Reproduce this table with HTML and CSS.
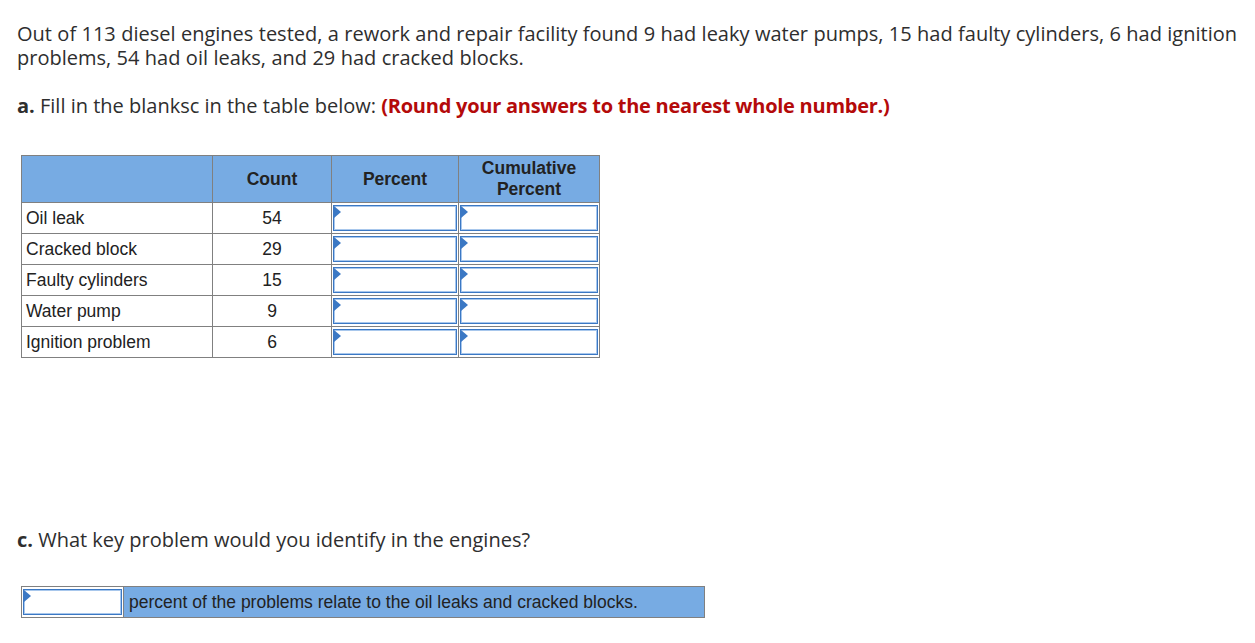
FILE: index.html
```html
<!DOCTYPE html>
<html>
<head>
<meta charset="utf-8">
<link rel="stylesheet" href="styles.css">
</head>
<body>
<div class="page">
  <p class="intro">Out of 113 diesel engines tested, a rework and repair facility found 9 had leaky water pumps, 15 had faulty cylinders, 6 had ignition problems, 54 had oil leaks, and 29 had cracked blocks.</p>
  <p class="part-a"><b>a.</b> Fill in the blanksc in the table below: <span class="hint">(Round your answers to the nearest whole number.)</span></p>

  <table class="grid">
    <thead>
      <tr>
        <th class="c-label"></th>
        <th class="c-count">Count</th>
        <th class="c-pct">Percent</th>
        <th class="c-cum">Cumulative<br>Percent</th>
      </tr>
    </thead>
    <tbody>
      <tr><td class="label">Oil leak</td><td class="num">54</td><td class="in"><div class="box"><span class="tri"></span></div></td><td class="in"><div class="box"><span class="tri"></span></div></td></tr>
      <tr><td class="label">Cracked block</td><td class="num">29</td><td class="in"><div class="box"><span class="tri"></span></div></td><td class="in"><div class="box"><span class="tri"></span></div></td></tr>
      <tr><td class="label">Faulty cylinders</td><td class="num">15</td><td class="in"><div class="box"><span class="tri"></span></div></td><td class="in"><div class="box"><span class="tri"></span></div></td></tr>
      <tr><td class="label">Water pump</td><td class="num">9</td><td class="in"><div class="box"><span class="tri"></span></div></td><td class="in"><div class="box"><span class="tri"></span></div></td></tr>
      <tr><td class="label">Ignition problem</td><td class="num">6</td><td class="in"><div class="box"><span class="tri"></span></div></td><td class="in"><div class="box"><span class="tri"></span></div></td></tr>
    </tbody>
  </table>

  <p class="part-c"><b>c.</b> What key problem would you identify in the engines?</p>

  <table class="answer">
    <tr>
      <td class="in small"><div class="box"><span class="tri"></span></div></td>
      <td class="sentence">percent of the problems relate to the oil leaks and cracked blocks.</td>
    </tr>
  </table>
</div>
</body>
</html>
```
FILE: styles.css
```css
html, body {
  margin: 0;
  padding: 0;
  background: #ffffff;
}
.page {
  padding: 22px 0 0 17px;
  font-family: "Open Sans", "Liberation Sans", sans-serif;
  font-size: 20px;
  color: #2e2e2e;
}
.intro {
  margin: 0;
  line-height: 24px;
  width: 1236px;
  word-spacing: 0.2px;
}
.part-a {
  margin: 24px 0 0 0;
  line-height: 24px;
}
.part-a b, .part-c b {
  font-weight: 700;
}
.hint {
  color: #b40a0a;
  font-weight: 700;
  letter-spacing: -0.25px;
}
.grid, .answer {
  border-collapse: collapse;
  font-family: "Liberation Sans", Arial, sans-serif;
  font-size: 17.5px;
  color: #222;
}
.grid {
  margin: 37px 0 0 4px;
}
.grid th {
  background: #77abe3;
  border: 1px solid #808080;
  height: 46px;
  font-weight: 700;
  padding: 0;
  line-height: 21px;
}
.c-label { width: 190px; }
.c-count { width: 118px; }
.c-pct { width: 126px; }
.c-cum { width: 140px; }
.grid td {
  border: 1px solid #808080;
  height: 30px;
  padding: 0;
}
.label {
  padding-left: 4px !important;
  text-align: left;
}
.num {
  text-align: center;
}
.in {
  padding: 0 !important;
  vertical-align: middle;
}
.box {
  position: relative;
  height: 24px;
  margin: 1px;
  border: 1px solid #3b78c4;
  box-shadow: inset 0 0 0 1px #a8c7ec;
  background: #fff;
}
.tri {
  position: absolute;
  left: 0;
  top: 0;
  width: 0;
  height: 0;
  border-top: 6px solid transparent;
  border-bottom: 6px solid transparent;
  border-left: 7px solid #3b78c4;
}
.part-c {
  margin: 170px 0 0 0;
  line-height: 24px;
}
.answer {
  margin: 34px 0 0 4px;
}
.answer td {
  border: 1px solid #808080;
  height: 30px;
  padding: 0;
}
.small {
  width: 101px;
}
.sentence {
  background: #77abe3;
  width: 575px;
  padding-left: 5px !important;
  color: #222;
}
```
